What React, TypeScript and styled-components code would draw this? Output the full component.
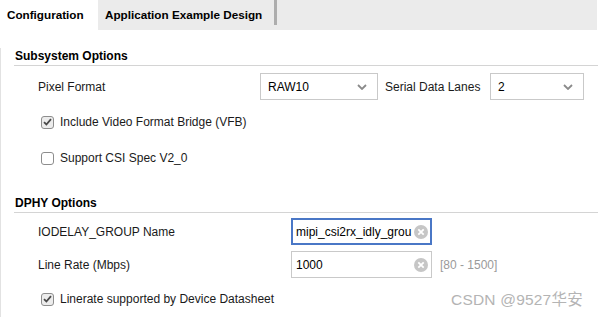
import React from "react";
import styled, { createGlobalStyle } from "styled-components";

const GlobalStyle = createGlobalStyle`
  html, body {
    margin: 0;
    padding: 0;
    background: #ffffff;
  }
  body {
    font-family: "Liberation Sans", Arial, sans-serif;
    font-size: 12px;
    color: #1a1a1a;
  }
`;

const Page = styled.div`
  position: relative;
  width: 598px;
  height: 317px;
  overflow: hidden;
  background: #fff;
`;

const TabBar = styled.div`
  display: flex;
  height: 30px;
  background: #ebebeb;
  margin-right: 1px;
`;

const Tab = styled.div<{ $active?: boolean; $width: number }>`
  display: flex;
  align-items: center;
  width: ${(p) => p.$width}px;
  box-sizing: border-box;
  padding: 0 0 2px 7px;
  background: ${(p) => (p.$active ? "#ffffff" : "transparent")};
  font-weight: bold;
  font-size: 11.7px;
  color: #000;
`;

const TabDivider = styled.div`
  width: 3px;
  height: 25px;
  background: #adadad;
`;

const Content = styled.div`
  border-left: 1px solid #e2e2e2;
  padding-left: 13px;
  height: 287px;
`;

const SectionTitle = styled.div<{ $top: number }>`
  margin-top: ${(p) => p.$top}px;
  height: 17px;
  line-height: 17px;
  padding-left: 1px;
  font-weight: bold;
  border-bottom: 1px solid #d4d4d4;
  color: #000;
`;

const FieldRow = styled.div<{ $top: number }>`
  display: flex;
  align-items: center;
  margin-top: ${(p) => p.$top}px;
  height: 27px;
  padding-left: 24px;
`;

const Label = styled.div<{ $width?: number }>`
  width: ${(p) => (p.$width ? `${p.$width}px` : "auto")};
  flex-shrink: 0;
`;

const Select = styled.div<{ $width: number }>`
  display: flex;
  align-items: center;
  justify-content: space-between;
  flex-shrink: 0;
  box-sizing: border-box;
  width: ${(p) => p.$width}px;
  height: 27px;
  padding: 0 10px 0 7px;
  border: 1px solid #c9c9c9;
  background: #fff;
  color: #000;
`;

const InlineLabel = styled.div`
  flex-shrink: 0;
  width: 112px;
  padding-left: 7px;
  box-sizing: border-box;
  white-space: nowrap;
`;

const TextBox = styled.div<{ $focused?: boolean }>`
  display: flex;
  align-items: center;
  box-sizing: border-box;
  width: 141px;
  height: 27px;
  padding: ${(p) => (p.$focused ? "0 2px 0 3px" : "0 3px 0 4px")};
  border: ${(p) => (p.$focused ? "2px solid #4a77c6" : "1px solid #c9c9c9")};
  background: #fff;
  color: #000;
`;

const TextValue = styled.span`
  flex: 1;
  white-space: nowrap;
`;

const Range = styled.span`
  margin-left: 8px;
  color: #9a9a9a;
`;

const CheckRow = styled.div<{ $top: number }>`
  display: flex;
  align-items: center;
  gap: 6px;
  margin-top: ${(p) => p.$top}px;
  height: 14px;
  padding-left: 27px;
`;

const Box = styled.div<{ $checked?: boolean }>`
  display: flex;
  align-items: center;
  justify-content: center;
  box-sizing: border-box;
  width: 13px;
  height: 13px;
  border: 1px solid #8d8d8d;
  border-radius: 3px;
  background: ${(p) => (p.$checked ? "#ececec" : "#fff")};
`;

const Watermark = styled.div`
  position: absolute;
  left: 451px;
  top: 287px;
  font-size: 15.5px;
  color: #b4b4b4;
  font-family: "Liberation Sans", "Noto Sans CJK SC", sans-serif;
  letter-spacing: 0.2px;
`;

const Chevron = () => (
  <svg width="10" height="6" viewBox="0 0 10 6">
    <path d="M1 1 L5 5 L9 1" fill="none" stroke="#8a8a8a" strokeWidth="1.8" />
  </svg>
);

const ClearIcon = () => (
  <svg width="14" height="14" viewBox="0 0 14 14">
    <circle cx="7" cy="7" r="7" fill="#c6c6c6" />
    <path d="M4.3 4.3 L9.7 9.7 M9.7 4.3 L4.3 9.7" stroke="#fff" strokeWidth="1.8" />
  </svg>
);

const Check = ({ checked, children, top }: { checked?: boolean; children: React.ReactNode; top: number }) => (
  <CheckRow $top={top}>
    <Box $checked={checked}>
      {checked && (
        <svg width="9" height="8" viewBox="0 0 9 8">
          <path d="M1 4.2 L3.4 6.5 L8 1.2" fill="none" stroke="#4a4a4a" strokeWidth="1.8" />
        </svg>
      )}
    </Box>
    <span>{children}</span>
  </CheckRow>
);

export default function App() {
  return (
    <Page>
      <GlobalStyle />
      <TabBar>
        <Tab $active $width={98}>Configuration</Tab>
        <Tab $width={176}>Application Example Design</Tab>
        <TabDivider />
      </TabBar>
      <Content>
        <SectionTitle $top={18}>Subsystem Options</SectionTitle>
        <FieldRow $top={7}>
          <Label $width={222}>Pixel Format</Label>
          <Select $width={118}>
            <span>RAW10</span>
            <Chevron />
          </Select>
          <InlineLabel>Serial Data Lanes</InlineLabel>
          <Select $width={94}>
            <span>2</span>
            <Chevron />
          </Select>
        </FieldRow>
        <Check checked top={15}>Include Video Format Bridge (VFB)</Check>
        <Check top={22}>Support CSI Spec V2_0</Check>

        <SectionTitle $top={30}>DPHY Options</SectionTitle>
        <FieldRow $top={5}>
          <Label $width={253}>IODELAY_GROUP Name</Label>
          <TextBox $focused>
            <TextValue>mipi_csi2rx_idly_grou</TextValue>
            <ClearIcon />
          </TextBox>
        </FieldRow>
        <FieldRow $top={6}>
          <Label $width={253}>Line Rate (Mbps)</Label>
          <TextBox>
            <TextValue>1000</TextValue>
            <ClearIcon />
          </TextBox>
          <Range>[80 - 1500]</Range>
        </FieldRow>
        <Check checked top={14}>Linerate supported by Device Datasheet</Check>
      </Content>
      <Watermark>CSDN @9527华安</Watermark>
    </Page>
  );
}
